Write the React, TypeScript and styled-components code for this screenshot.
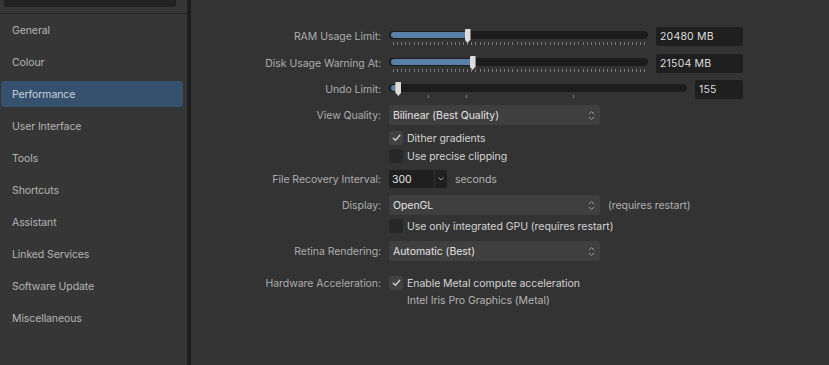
import styled, { createGlobalStyle } from "styled-components";

const GlobalStyle = createGlobalStyle`
  html, body { margin: 0; padding: 0; background: #333333; }
  body { font-family: Inter, "Noto Sans", sans-serif; font-size: 10.5px; letter-spacing: -0.05px; -webkit-font-smoothing: antialiased; }
  * { box-sizing: border-box; }
`;

const Window = styled.div`
  display: flex;
  width: 829px;
  height: 365px;
  overflow: hidden;
  background: #333333;
`;

const Sidebar = styled.div`
  width: 187px;
  flex: none;
  background: #363636;
  display: flex;
  flex-direction: column;
  padding: 0 4px 0 1px;
`;

const Search = styled.div`
  height: 7px;
  margin: 0 7px 0 3px;
  background: #222222;
  border-radius: 0 0 3px 3px;
`;

const SideRule = styled.div`
  height: 1px;
  margin: 6px -4px 3px -1px;
  background: #262626;
`;

const NavList = styled.ul`
  list-style: none;
  margin: 0;
  padding: 0;
  display: flex;
  flex-direction: column;
  gap: 6px;
`;

const NavItem = styled.li<{ $active?: boolean }>`
  height: 26px;
  display: flex;
  align-items: center;
  padding-left: 11px;
  border-radius: 3px;
  color: ${p => (p.$active ? "#c9d3de" : "#b4b4b4")};
  background: ${p => (p.$active ? "#35516e" : "transparent")};
  letter-spacing: -0.1px;
`;

const Divider = styled.div`
  width: 4px;
  flex: none;
  background: #1e1e1e;
`;

const Main = styled.div`
  flex: 1;
  padding-top: 27px;
  display: flex;
  flex-direction: column;
`;

const Row = styled.div<{ $top?: number; $h: number }>`
  display: grid;
  grid-template-columns: 190px auto;
  column-gap: 8px;
  align-items: center;
  margin-top: ${p => p.$top ?? 0}px;
  height: ${p => p.$h}px;
`;

const Label = styled.div`
  text-align: right;
  color: #adadad;
  white-space: nowrap;
`;

const Controls = styled.div`
  display: flex;
  align-items: center;
  height: 100%;
  gap: 8px;
`;

const SliderWrap = styled.div<{ $w: number }>`
  width: ${p => p.$w}px;
  align-self: flex-start;
  padding-top: 4px;
  display: flex;
  flex-direction: column;
  gap: 3px;
`;

const Track = styled.div`
  position: relative;
  height: 8px;
  border-radius: 4px;
  background: #1c1c1c;
  padding: 1px 2px;
`;

const Fill = styled.div`
  height: 6px;
  border-radius: 3px;
  background: #5b80a8;
`;

const Handle = styled.div`
  position: absolute;
  top: -2px;
  width: 6px;
  height: 14px;
  margin-left: -3px;
  background: #dcdcdc;
  clip-path: polygon(0 0, 100% 0, 100% 75%, 50% 100%, 0 75%);
  border-radius: 1px;
`;

const Ticks = styled.div`
  height: 3px;
  margin: 0 3px 0 4px;
  background: repeating-linear-gradient(90deg, #7a7a7a 0 1px, transparent 1px 4.12px);
`;

const SparseTicks = styled.div`
  position: relative;
  height: 3px;
`;

const Tick = styled.span`
  position: absolute;
  top: 0;
  width: 1px;
  height: 3px;
  background: #7a7a7a;
`;

const ValueBox = styled.div<{ $w: number }>`
  width: ${p => p.$w}px;
  height: 19px;
  background: #1f1f1f;
  border-radius: 2px;
  color: #dedede;
  display: flex;
  align-items: center;
  padding-left: 4px;
  letter-spacing: 0.2px;
`;

const Select = styled.div`
  width: 211px;
  height: 20px;
  background: #3f3f3f;
  border-radius: 3px;
  color: #e2e2e2;
  display: flex;
  align-items: center;
  justify-content: space-between;
  padding: 0 5px 0 4px;
`;

const Combo = styled.div`
  display: flex;
  height: 18px;
  gap: 1px;
`;

const ComboField = styled.div`
  width: 45px;
  background: #1f1f1f;
  border-radius: 2px 0 0 2px;
  color: #e6e6e6;
  display: flex;
  align-items: center;
  padding-left: 3px;
`;

const ComboButton = styled.div`
  width: 12px;
  background: #1f1f1f;
  border-radius: 0 2px 2px 0;
  display: flex;
  align-items: center;
  justify-content: center;
`;

const Muted = styled.span`
  color: #b0b0b0;
  white-space: nowrap;
`;

const Check = styled.label`
  display: flex;
  align-items: center;
  gap: 4px;
  color: #d4d4d4;
  white-space: nowrap;
`;

const Box = styled.span<{ $on?: boolean }>`
  width: 14px;
  height: 14px;
  border-radius: 3px;
  background: ${p => (p.$on ? "#414141" : "#272727")};
  display: flex;
  align-items: center;
  justify-content: center;
`;

const Note = styled.div`
  color: #b4b4b4;
  padding-left: 18px;
`;

const UpDown = () => (
  <svg width="7" height="11" viewBox="0 0 7 11">
    <path d="M1 4 L3.5 1.5 L6 4 M1 7 L3.5 9.5 L6 7" fill="none" stroke="#9b9b9b" strokeWidth="1" />
  </svg>
);

const Chevron = () => (
  <svg width="6" height="4" viewBox="0 0 6 4">
    <path d="M0.5 0.5 L3 3 L5.5 0.5" fill="none" stroke="#a0a0a0" strokeWidth="1" />
  </svg>
);

const Tickmark = () => (
  <svg width="9" height="8" viewBox="0 0 9 8">
    <path d="M1.3 4.3 L3.4 6.3 L7.8 1.3" fill="none" stroke="#cfcfcf" strokeWidth="1.4" strokeLinecap="round" strokeLinejoin="round" />
  </svg>
);

function Slider({ w, value, ticks }: { w: number; value: number; ticks?: number[] }) {
  return (
    <SliderWrap $w={w}>
      <Track>
        <Fill style={{ width: `${value * 100}%` }} />
        <Handle style={{ left: `calc(2px + ${value} * (100% - 4px))` }} />
      </Track>
      {ticks ? (
        <SparseTicks>
          {ticks.map(t => (
            <Tick key={t} style={{ left: t }} />
          ))}
        </SparseTicks>
      ) : (
        <Ticks />
      )}
    </SliderWrap>
  );
}

function CheckBox({ checked, children }: { checked?: boolean; children: string }) {
  return (
    <Check>
      <Box $on={checked}>{checked && <Tickmark />}</Box>
      {children}
    </Check>
  );
}

const nav = [
  "General",
  "Colour",
  "Performance",
  "User Interface",
  "Tools",
  "Shortcuts",
  "Assistant",
  "Linked Services",
  "Software Update",
  "Miscellaneous",
];

export default function App() {
  return (
    <>
      <GlobalStyle />
      <Window>
        <Sidebar>
          <Search />
          <SideRule />
          <NavList>
            {nav.map(n => (
              <NavItem key={n} $active={n === "Performance"}>
                {n}
              </NavItem>
            ))}
          </NavList>
        </Sidebar>
        <Divider />
        <Main>
          <Row $h={19}>
            <Label>RAM Usage Limit:</Label>
            <Controls>
              <Slider w={259} value={0.3} />
              <ValueBox $w={87}>20480 MB</ValueBox>
            </Controls>
          </Row>
          <Row $top={8} $h={19}>
            <Label>Disk Usage Warning At:</Label>
            <Controls>
              <Slider w={259} value={0.32} />
              <ValueBox $w={87}>21504 MB</ValueBox>
            </Controls>
          </Row>
          <Row $top={7} $h={18}>
            <Label>Undo Limit:</Label>
            <Controls>
              <Slider w={298} value={0.025} ticks={[39, 77, 184]} />
              <ValueBox $w={48}>155</ValueBox>
            </Controls>
          </Row>
          <Row $top={7} $h={20}>
            <Label>View Quality:</Label>
            <Controls>
              <Select>
                Bilinear (Best Quality)
                <UpDown />
              </Select>
            </Controls>
          </Row>
          <Row $top={6} $h={14}>
            <span />
            <CheckBox checked>Dither gradients</CheckBox>
          </Row>
          <Row $top={4} $h={14}>
            <span />
            <CheckBox>Use precise clipping</CheckBox>
          </Row>
          <Row $top={7} $h={18}>
            <Label>File Recovery Interval:</Label>
            <Controls>
              <Combo>
                <ComboField>300</ComboField>
                <ComboButton>
                  <Chevron />
                </ComboButton>
              </Combo>
              <Muted>seconds</Muted>
            </Controls>
          </Row>
          <Row $top={7} $h={20}>
            <Label>Display:</Label>
            <Controls>
              <Select>
                OpenGL
                <UpDown />
              </Select>
              <Muted>(requires restart)</Muted>
            </Controls>
          </Row>
          <Row $top={4} $h={14}>
            <span />
            <CheckBox>Use only integrated GPU (requires restart)</CheckBox>
          </Row>
          <Row $top={8} $h={20}>
            <Label>Retina Rendering:</Label>
            <Controls>
              <Select>
                Automatic (Best)
                <UpDown />
              </Select>
            </Controls>
          </Row>
          <Row $top={15} $h={14}>
            <Label>Hardware Acceleration:</Label>
            <CheckBox checked>Enable Metal compute acceleration</CheckBox>
          </Row>
          <Row $top={3} $h={14}>
            <span />
            <Note>Intel Iris Pro Graphics (Metal)</Note>
          </Row>
        </Main>
      </Window>
    </>
  );
}
